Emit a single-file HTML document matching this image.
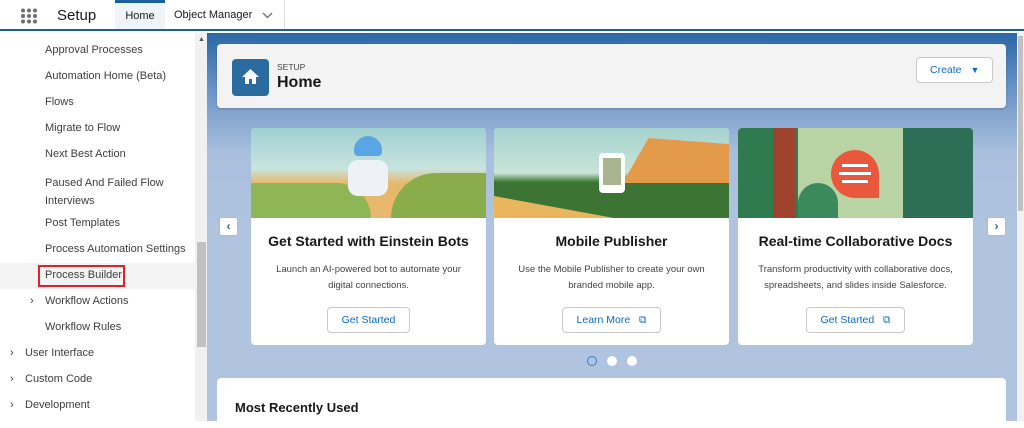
<!DOCTYPE html>
<html><head><meta charset="utf-8"><style>
*{box-sizing:border-box;margin:0;padding:0}
body{width:1024px;height:421px;overflow:hidden;font-family:"Liberation Sans",sans-serif;background:#fff;position:relative;color:#181818}
.top{position:absolute;left:0;top:0;width:1024px;height:31px;background:#fff;border-bottom:2px solid #1b5f9e}
.abs{position:absolute}
.side{position:absolute;left:0;top:33px;width:195px;height:388px;background:#fff;font-size:11px;color:#3e3e3c}
.side div{position:absolute;white-space:nowrap}
.main{position:absolute;left:207px;top:33px;width:810px;height:388px;background:linear-gradient(#2a68a6 0px,#6f96c8 60px,#a9bfdd 120px,#b0c4df 200px)}
.card{position:absolute;top:95px;width:235px;height:217px;background:#fff;border-radius:4px;overflow:hidden;text-align:center}
.card .img{height:90px}
.card h3{font-size:14px;margin-top:15px;font-weight:bold;color:#181818}
.card p{font-size:9.5px;color:#444;line-height:16px;margin-top:13px;padding:0 18px}
.btn{display:inline-block;border:1px solid #c9c9c9;border-radius:4px;height:26px;line-height:24px;font-size:10.5px;color:#0b6bcb;margin-top:13px;padding:0 14px}
</style></head><body>
<div class="top">
 <svg class="abs" style="left:20px;top:8px" width="18" height="16"><g fill="#706e6b"><circle cx="3" cy="2.5" r="2"/><circle cx="9" cy="2.5" r="2"/><circle cx="15" cy="2.5" r="2"/><circle cx="3" cy="8" r="2"/><circle cx="9" cy="8" r="2"/><circle cx="15" cy="8" r="2"/><circle cx="3" cy="13.5" r="2"/><circle cx="9" cy="13.5" r="2"/><circle cx="15" cy="13.5" r="2"/></g></svg>
 <div class="abs" style="left:57px;top:7px;font-size:15px;color:#181818">Setup</div>
 <div class="abs" style="left:115px;top:0;width:50px;height:29px;background:#eef4f8;border-top:3px solid #1b5f9e;font-size:11px;text-align:center;line-height:26px">Home</div>
 <div class="abs" style="left:174px;top:9px;font-size:11px">Object Manager</div>
 <svg class="abs" style="left:262px;top:12px" width="11" height="7"><path d="M1 1l4.5 4.5L10 1" stroke="#706e6b" fill="none" stroke-width="1.3"/></svg>
 <div class="abs" style="left:284px;top:0;width:1px;height:29px;background:#ddd"></div>
</div>
<div class="side">
 <div style="left:45px;top:11px">Approval Processes</div>
 <div style="left:45px;top:37px">Automation Home (Beta)</div>
 <div style="left:45px;top:63px">Flows</div>
 <div style="left:45px;top:89px">Migrate to Flow</div>
 <div style="left:45px;top:115px">Next Best Action</div>
 <div style="left:45px;top:141px;line-height:18px">Paused And Failed Flow<br>Interviews</div>
 <div style="left:45px;top:184px">Post Templates</div>
 <div style="left:45px;top:210px">Process Automation Settings</div>
 <div style="left:0;top:230px;width:195px;height:26px;background:#f3f3f3"></div>
 <div style="left:38px;top:232px;width:87px;height:22px;border:2px solid #e0202b"></div>
 <div style="left:45px;top:236px">Process Builder</div>
 <div style="left:30px;top:262px">›</div><div style="left:45px;top:262px">Workflow Actions</div>
 <div style="left:45px;top:288px">Workflow Rules</div>
 <div style="left:10px;top:314px">›</div><div style="left:25px;top:314px">User Interface</div>
 <div style="left:10px;top:340px">›</div><div style="left:25px;top:340px">Custom Code</div>
 <div style="left:10px;top:366px">›</div><div style="left:25px;top:366px">Development</div>
</div>
<div class="abs" style="left:195px;top:33px;width:12px;height:388px;background:#f1f1f1"></div>
<div class="abs" style="left:197px;top:242px;width:9px;height:105px;background:#c1c1c1"></div>
<div class="abs" style="left:198px;top:36px;font-size:7px;color:#555">▲</div>
<div class="main">
 <div class="abs" style="left:10px;top:11px;width:789px;height:64px;background:#f3f3f3;border-radius:4px;box-shadow:0 1px 2px rgba(0,0,0,.2)">
  <div class="abs" style="left:15px;top:15px;width:37px;height:37px;background:#2a6c9f;border-radius:4px"></div>
  <svg class="abs" style="left:24px;top:23px" width="19" height="19"><path d="M9.5 2L1 10h3v7h4v-5h3v5h4v-7h3z" fill="#fff"/></svg>
  <div class="abs" style="left:60px;top:18px;font-size:8.5px;color:#444">SETUP</div>
  <div class="abs" style="left:60px;top:30px;font-size:16px;font-weight:bold">Home</div>
  <div class="abs" style="left:699px;top:13px;width:77px;height:26px;background:#fff;border:1px solid #c9c9c9;border-radius:4px;font-size:10.5px;color:#0b6bcb;line-height:25px;padding-left:13px">Create <span style="font-size:9px;margin-left:6px">▼</span></div>
 </div>
 <div class="abs" style="left:12px;top:184px;width:19px;height:19px;background:#fff;border:1px solid #bbb;border-radius:3px;font-size:12px;text-align:center;line-height:16px;color:#3e5f8a;font-weight:bold">‹</div>
 <div class="abs" style="left:780px;top:184px;width:19px;height:19px;background:#fff;border:1px solid #bbb;border-radius:3px;font-size:12px;text-align:center;line-height:16px;color:#3e5f8a;font-weight:bold">›</div>
 <div class="card" style="left:44px">
  <div class="img" style="background:linear-gradient(#9fd0d0 0,#c8e4df 45%,#e6b86a 62%,#e8b86c 100%);position:relative">
   <div class="abs" style="left:0;top:55px;width:120px;height:35px;background:#8fb654;border-radius:0 60px 0 0"></div>
   <div class="abs" style="left:140px;top:45px;width:95px;height:45px;background:#8aac4a;border-radius:60px 0 0 0"></div>
   <div class="abs" style="left:97px;top:32px;width:40px;height:36px;background:#eef2f6;border-radius:10px"></div>
   <div class="abs" style="left:103px;top:8px;width:28px;height:20px;background:#5aa5e6;border-radius:14px 14px 4px 4px"></div>
  </div>
  <h3>Get Started with Einstein Bots</h3>
  <p>Launch an AI-powered bot to automate your digital connections.</p>
  <span class="btn">Get Started</span>
 </div>
 <div class="card" style="left:287px">
  <div class="img" style="background:linear-gradient(#a6d3cf,#c9e3d8 50%,#3f7a35 60%,#2f6a2f 100%);position:relative">
   <div class="abs" style="left:120px;top:10px;width:115px;height:60px;background:#e39a4a;clip-path:polygon(30% 0,100% 10%,100% 100%,0 100%)"></div>
   <div class="abs" style="left:0;top:55px;width:235px;height:35px;background:#3c7533"></div>
   <div class="abs" style="left:0;top:68px;width:120px;height:22px;background:#e9b65e;clip-path:polygon(0 0,100% 100%,0 100%)"></div>
   <div class="abs" style="left:105px;top:25px;width:26px;height:40px;background:#fff;border-radius:4px"></div>
   <div class="abs" style="left:109px;top:30px;width:18px;height:27px;background:#a9b58e"></div>
  </div>
  <h3>Mobile Publisher</h3>
  <p>Use the Mobile Publisher to create your own branded mobile app.</p>
  <span class="btn">Learn More &nbsp;&nbsp;⧉</span>
 </div>
 <div class="card" style="left:531px">
  <div class="img" style="background:#b9d3a4;position:relative">
   <div class="abs" style="left:0;top:0;width:60px;height:90px;background:#2f7a4f"></div>
   <div class="abs" style="left:35px;top:0;width:22px;height:90px;background:#a0432e"></div>
   <div class="abs" style="left:165px;top:0;width:70px;height:90px;background:#2d6f56"></div>
   <div class="abs" style="left:60px;top:55px;width:40px;height:35px;background:#3a8a5e;border-radius:20px 20px 0 0"></div>
   <div class="abs" style="left:93px;top:22px;width:48px;height:48px;background:#e9583c;border-radius:50% 50% 0 50%"></div>
   <div class="abs" style="left:104px;top:36px;width:26px;height:3px;background:#fff"></div>
   <div class="abs" style="left:101px;top:44px;width:32px;height:3px;background:#fff"></div>
   <div class="abs" style="left:104px;top:52px;width:26px;height:3px;background:#fff"></div>
  </div>
  <h3>Real-time Collaborative Docs</h3>
  <p>Transform productivity with collaborative docs, spreadsheets, and slides inside Salesforce.</p>
  <span class="btn">Get Started &nbsp;&nbsp;⧉</span>
 </div>
 <div class="abs" style="left:380px;top:323px;width:10px;height:10px;border:1.5px solid #2e84d6;border-radius:50%"></div>
 <div class="abs" style="left:400px;top:323px;width:10px;height:10px;background:#fff;border-radius:50%"></div>
 <div class="abs" style="left:420px;top:323px;width:10px;height:10px;background:#fff;border-radius:50%"></div>
 <div class="abs" style="left:10px;top:345px;width:789px;height:50px;background:#fff;border-radius:4px">
  <div class="abs" style="left:18px;top:22px;font-size:13px;font-weight:bold">Most Recently Used</div>
 </div>
</div>
<div class="abs" style="left:1017px;top:33px;width:7px;height:388px;background:#f1f1f1"></div>
<div class="abs" style="left:1018px;top:36px;width:5px;height:175px;background:#c1c1c1"></div>
</body></html>
